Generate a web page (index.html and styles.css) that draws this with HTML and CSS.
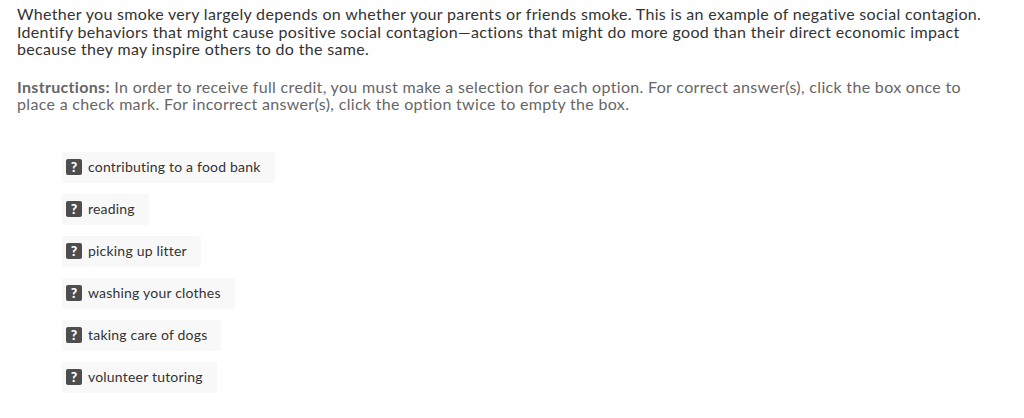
FILE: index.html
```html
<!DOCTYPE html>
<html>
<head>
<meta charset="utf-8">
<link rel="stylesheet" href="styles.css">
</head>
<body>
<div class="page">
  <p class="prompt">Whether you smoke very largely depends on whether your parents or friends smoke. This is an example of negative social contagion. Identify behaviors that might cause positive social contagion—actions that might do more good than their direct economic impact because they may inspire others to do the same.</p>
  <p class="instructions"><strong>Instructions:</strong> In order to receive full credit, you must make a selection for each option. For correct answer(s), click the box once to place a check mark. For incorrect answer(s), click the option twice to empty the box.</p>
  <ul class="options">
    <li class="option"><span class="qbox">?</span><span class="label">contributing to a food bank</span></li>
    <li class="option"><span class="qbox">?</span><span class="label">reading</span></li>
    <li class="option"><span class="qbox">?</span><span class="label">picking up litter</span></li>
    <li class="option"><span class="qbox">?</span><span class="label">washing your clothes</span></li>
    <li class="option"><span class="qbox">?</span><span class="label">taking care of dogs</span></li>
    <li class="option"><span class="qbox">?</span><span class="label">volunteer tutoring</span></li>
  </ul>
</div>
</body>
</html>
```
FILE: styles.css
```css
html, body {
  margin: 0;
  padding: 0;
  background: #ffffff;
}
.page {
  padding: 5px 17px 0 17px;
  font-family: "Lato", "Liberation Sans", sans-serif;
  color: #333333;
}
.prompt {
  margin: 0;
  font-size: 16px;
  line-height: 17.5px;
  letter-spacing: 0.32px;
  width: 975px;
}
.instructions {
  margin: 20px 0 0 0;
  font-size: 16px;
  line-height: 17.5px;
  letter-spacing: 0.32px;
  color: #666666;
  width: 960px;
}
.instructions strong {
  font-weight: 700;
}
.options {
  list-style: none;
  margin: 39px 0 0 45px;
  padding: 0;
  display: flex;
  flex-direction: column;
  align-items: flex-start;
  gap: 11px;
}
.option {
  display: flex;
  align-items: center;
  gap: 6px;
  background: #f8f8f8;
  padding: 7px 14px 8px 4px;
  height: 16px;
  border-radius: 2px;
}
.qbox {
  width: 16px;
  height: 16px;
  background: #4d4d4d;
  color: #ffffff;
  border-radius: 2px;
  font-weight: 900;
  font-size: 14px;
  line-height: 16px;
  text-align: center;
  letter-spacing: 0;
}
.label {
  font-size: 14px;
  line-height: 16px;
  letter-spacing: 0.2px;
  color: #333333;
}
```
